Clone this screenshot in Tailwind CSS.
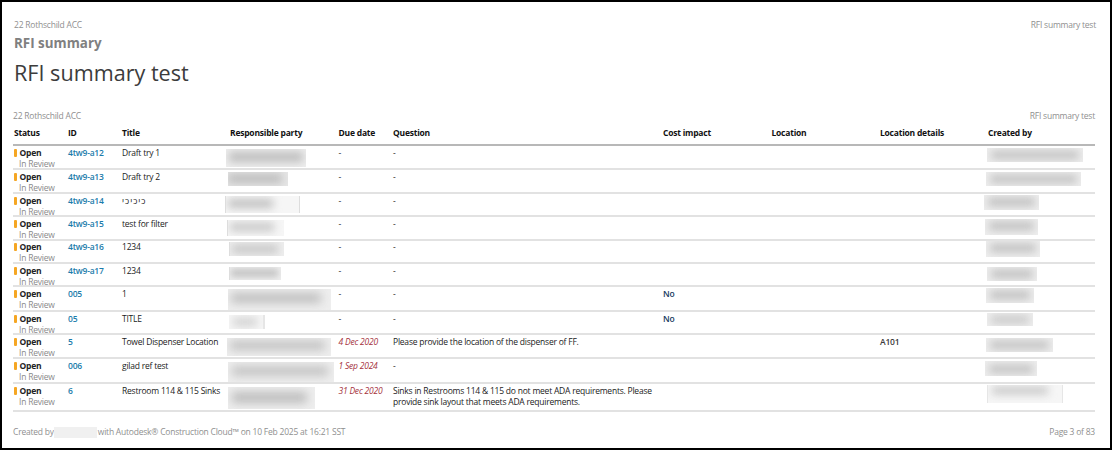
<!DOCTYPE html>
<html lang="en">
<head>
<meta charset="UTF-8">
<title>RFI summary</title>
<script src="https://cdn.jsdelivr.net/npm/@tailwindcss/browser@4"></script>
</head>
<body class="w-[1112px] h-[450px] overflow-hidden bg-white">
<div class="relative w-[1112px] h-[450px] border-2 border-black bg-white font-['Open_Sans',sans-serif] text-[8.5px] tracking-[-0.22px] leading-[11px] text-[#222]">
  <!-- page header -->
  <div class="flex justify-between pl-[12px] pr-[14px] pt-[17px] text-[#8f8f8f]">
    <span>22 Rothschild ACC</span>
    <span>RFI summary test</span>
  </div>
  <h2 class="pl-[12px] mt-[4px] text-[13.4px] tracking-normal leading-[18px] font-bold text-[#808080]">RFI summary</h2>
  <h1 class="pl-[12px] mt-[5px] text-[21.6px] tracking-normal leading-[32px] text-[#3c3c3c]">RFI summary test</h1>

  <div class="flex justify-between pl-[11px] pr-[15px] mt-[21px] text-[#8f8f8f]">
    <span>22 Rothschild ACC</span>
    <span>RFI summary test</span>
  </div>

  <!-- table -->
  <div class="ml-[11px] mr-[15px] mt-[6px] w-[1082px]">
    <div class="grid grid-cols-[54px_54px_108px_108.5px_54.5px_270px_108.5px_108.5px_108px_1fr] h-[19px] pl-[1px] border-b-2 border-[#b8b8b8] font-bold text-[#111]">
      <div>Status</div><div>ID</div><div>Title</div><div>Responsible party</div><div>Due date</div><div>Question</div><div>Cost impact</div><div>Location</div><div>Location details</div><div>Created by</div>
    </div>

    <div class="grid grid-cols-[54px_54px_108px_108.5px_54.5px_270px_108.5px_108.5px_108px_1fr] h-[24px] pl-[1px] pt-[1px] border-b-2 border-[#e2e2e2]">
      <div class="flex flex-col"><span class="flex items-center gap-[3px] font-bold"><i class="w-[2.5px] h-[8px] rounded-[1px] bg-[#f5a623]"></i>Open</span><span class="pl-[5px] text-[#8a8a8a]">In Review</span></div>
      <div class="font-semibold text-[#1b7cab]">4tw9-a12</div><div>Draft try 1</div><div></div><div>-</div><div>-</div><div></div><div></div><div></div><div></div>
    </div>
    <div class="grid grid-cols-[54px_54px_108px_108.5px_54.5px_270px_108.5px_108.5px_108px_1fr] h-[24px] pl-[1px] pt-[1px] border-b-2 border-[#e2e2e2]">
      <div class="flex flex-col"><span class="flex items-center gap-[3px] font-bold"><i class="w-[2.5px] h-[8px] rounded-[1px] bg-[#f5a623]"></i>Open</span><span class="pl-[5px] text-[#8a8a8a]">In Review</span></div>
      <div class="font-semibold text-[#1b7cab]">4tw9-a13</div><div>Draft try 2</div><div></div><div>-</div><div>-</div><div></div><div></div><div></div><div></div>
    </div>
    <div class="grid grid-cols-[54px_54px_108px_108.5px_54.5px_270px_108.5px_108.5px_108px_1fr] h-[23px] pl-[1px] pt-[1px] border-b-2 border-[#e2e2e2]">
      <div class="flex flex-col"><span class="flex items-center gap-[3px] font-bold"><i class="w-[2.5px] h-[8px] rounded-[1px] bg-[#f5a623]"></i>Open</span><span class="pl-[5px] text-[#8a8a8a]">In Review</span></div>
      <div class="font-semibold text-[#1b7cab]">4tw9-a14</div><div class="tracking-[1px]">כיכיכי</div><div></div><div>-</div><div>-</div><div></div><div></div><div></div><div></div>
    </div>
    <div class="grid grid-cols-[54px_54px_108px_108.5px_54.5px_270px_108.5px_108.5px_108px_1fr] h-[24px] pl-[1px] pt-[1px] border-b-2 border-[#e2e2e2]">
      <div class="flex flex-col"><span class="flex items-center gap-[3px] font-bold"><i class="w-[2.5px] h-[8px] rounded-[1px] bg-[#f5a623]"></i>Open</span><span class="pl-[5px] text-[#8a8a8a]">In Review</span></div>
      <div class="font-semibold text-[#1b7cab]">4tw9-a15</div><div>test for filter</div><div></div><div>-</div><div>-</div><div></div><div></div><div></div><div></div>
    </div>
    <div class="grid grid-cols-[54px_54px_108px_108.5px_54.5px_270px_108.5px_108.5px_108px_1fr] h-[23px] pl-[1px] border-b-2 border-[#e2e2e2]">
      <div class="flex flex-col"><span class="flex items-center gap-[3px] font-bold"><i class="w-[2.5px] h-[8px] rounded-[1px] bg-[#f5a623]"></i>Open</span><span class="pl-[5px] text-[#8a8a8a]">In Review</span></div>
      <div class="font-semibold text-[#1b7cab]">4tw9-a16</div><div>1234</div><div></div><div>-</div><div>-</div><div></div><div></div><div></div><div></div>
    </div>
    <div class="grid grid-cols-[54px_54px_108px_108.5px_54.5px_270px_108.5px_108.5px_108px_1fr] h-[23px] pl-[1px] pt-[1px] border-b-2 border-[#e2e2e2]">
      <div class="flex flex-col"><span class="flex items-center gap-[3px] font-bold"><i class="w-[2.5px] h-[8px] rounded-[1px] bg-[#f5a623]"></i>Open</span><span class="pl-[5px] text-[#8a8a8a]">In Review</span></div>
      <div class="font-semibold text-[#1b7cab]">4tw9-a17</div><div>1234</div><div></div><div>-</div><div>-</div><div></div><div></div><div></div><div></div>
    </div>
    <div class="grid grid-cols-[54px_54px_108px_108.5px_54.5px_270px_108.5px_108.5px_108px_1fr] h-[25px] pl-[1px] pt-[1px] border-b-2 border-[#e2e2e2]">
      <div class="flex flex-col"><span class="flex items-center gap-[3px] font-bold"><i class="w-[2.5px] h-[8px] rounded-[1px] bg-[#f5a623]"></i>Open</span><span class="pl-[5px] text-[#8a8a8a]">In Review</span></div>
      <div class="font-semibold text-[#1b7cab]">005</div><div>1</div><div></div><div>-</div><div>-</div><div class="font-semibold text-[#173a5e]">No</div><div></div><div></div><div></div>
    </div>
    <div class="grid grid-cols-[54px_54px_108px_108.5px_54.5px_270px_108.5px_108.5px_108px_1fr] h-[23px] pl-[1px] pt-[1px] border-b-2 border-[#e2e2e2]">
      <div class="flex flex-col"><span class="flex items-center gap-[3px] font-bold"><i class="w-[2.5px] h-[8px] rounded-[1px] bg-[#f5a623]"></i>Open</span><span class="pl-[5px] text-[#8a8a8a]">In Review</span></div>
      <div class="font-semibold text-[#1b7cab]">05</div><div>TITLE</div><div></div><div>-</div><div>-</div><div class="font-semibold text-[#173a5e]">No</div><div></div><div></div><div></div>
    </div>
    <div class="grid grid-cols-[54px_54px_108px_108.5px_54.5px_270px_108.5px_108.5px_108px_1fr] h-[24px] pl-[1px] pt-[1px] border-b-2 border-[#e2e2e2]">
      <div class="flex flex-col"><span class="flex items-center gap-[3px] font-bold"><i class="w-[2.5px] h-[8px] rounded-[1px] bg-[#f5a623]"></i>Open</span><span class="pl-[5px] text-[#8a8a8a]">In Review</span></div>
      <div class="font-semibold text-[#1b7cab]">5</div><div>Towel Dispenser Location</div><div></div><div class="italic text-[#a5323c]">4 Dec 2020</div><div>Please provide the location of the dispenser of FF.</div><div></div><div></div><div class="font-semibold text-[#3a3a3a]">A101</div><div></div>
    </div>
    <div class="grid grid-cols-[54px_54px_108px_108.5px_54.5px_270px_108.5px_108.5px_108px_1fr] h-[25px] pl-[1px] pt-[1px] border-b-2 border-[#e2e2e2]">
      <div class="flex flex-col"><span class="flex items-center gap-[3px] font-bold"><i class="w-[2.5px] h-[8px] rounded-[1px] bg-[#f5a623]"></i>Open</span><span class="pl-[5px] text-[#8a8a8a]">In Review</span></div>
      <div class="font-semibold text-[#1b7cab]">006</div><div>gilad ref test</div><div></div><div class="italic text-[#a5323c]">1 Sep 2024</div><div>-</div><div></div><div></div><div></div><div></div>
    </div>
    <div class="grid grid-cols-[54px_54px_108px_108.5px_54.5px_270px_108.5px_108.5px_108px_1fr] h-[28px] pl-[1px] pt-[1px] border-b-2 border-[#e2e2e2]">
      <div class="flex flex-col"><span class="flex items-center gap-[3px] font-bold"><i class="w-[2.5px] h-[8px] rounded-[1px] bg-[#f5a623]"></i>Open</span><span class="pl-[5px] text-[#8a8a8a]">In Review</span></div>
      <div class="font-semibold text-[#1b7cab]">6</div><div>Restroom 114 &amp; 115 Sinks</div><div></div><div class="italic text-[#a5323c]">31 Dec 2020</div><div class="w-[264px]">Sinks in Restrooms 114 &amp; 115 do not meet ADA requirements. Please provide sink layout that meets ADA requirements.</div><div></div><div></div><div></div><div></div>
    </div>
  </div>

  <!-- page footer -->
  <div class="flex justify-between pl-[11px] pr-[15px] mt-[14px] text-[#8f8f8f]">
    <span>Created by <span class="inline-block w-[40px]"></span> with Autodesk® Construction Cloud™ on 10 Feb 2025 at 16:21 SST</span>
    <span>Page 3 of 83</span>
  </div>

  <!-- redactions over the names, coordinates are the blurred areas -->
  <div class="absolute left-[224px] top-[147px] w-[80px] h-[18px] overflow-hidden bg-[#eeeeee]"><div class="mx-[3px] mt-[3px] h-[10px] bg-[#bdbdbd] blur-[4px]"></div></div>
  <div class="absolute left-[226px] top-[170px] w-[60px] h-[14px] overflow-hidden bg-[#e6e6e6]"><div class="mr-[6px] mt-[2px] h-[9px] bg-[#bbbbbb] blur-[4px]"></div></div>
  <div class="absolute left-[223px] top-[194px] w-[75px] h-[17px] overflow-hidden bg-[#f6f6f6] border-x border-[#dddddd]"><div class="mr-[26px] ml-[2px] mt-[3px] h-[9px] bg-[#c0c0c0] blur-[4px]"></div></div>
  <div class="absolute left-[225px] top-[218px] w-[57px] h-[16px] overflow-hidden bg-[#f6f6f6] border-l border-[#dddddd]"><div class="mr-[10px] ml-[2px] mt-[3px] h-[8px] bg-[#c4c4c4] blur-[4px]"></div></div>
  <div class="absolute left-[227px] top-[240px] w-[55px] h-[14px] overflow-hidden bg-[#eeeeee] border-l border-[#dddddd]"><div class="mr-[6px] ml-[2px] mt-[3px] h-[8px] bg-[#c4c4c4] blur-[4px]"></div></div>
  <div class="absolute left-[227px] top-[265px] w-[52px] h-[13px] overflow-hidden bg-[#eeeeee] border-l border-[#dddddd]"><div class="mr-[3px] ml-[1px] mt-[2px] h-[8px] bg-[#c4c4c4] blur-[3px]"></div></div>
  <div class="absolute left-[226px] top-[287px] w-[103px] h-[21px] overflow-hidden bg-[#eeeeee]"><div class="mr-[10px] ml-[3px] mt-[4px] h-[10px] bg-[#bfbfbf] blur-[5px]"></div></div>
  <div class="absolute left-[227px] top-[313px] w-[36px] h-[14px] overflow-hidden bg-[#f6f6f6] border-r-2 border-[#e6e6e6]"><div class="mr-[6px] ml-[4px] mt-[3px] h-[8px] bg-[#d0d0d0] blur-[4px]"></div></div>
  <div class="absolute left-[225px] top-[336px] w-[104px] h-[18px] overflow-hidden bg-[#eeeeee]"><div class="mr-[6px] ml-[3px] mt-[3px] h-[9px] bg-[#c0c0c0] blur-[5px]"></div></div>
  <div class="absolute left-[226px] top-[360px] w-[106px] h-[20px] overflow-hidden bg-[#eeeeee]"><div class="mr-[6px] ml-[4px] mt-[4px] h-[10px] bg-[#c4c4c4] blur-[5px]"></div></div>
  <div class="absolute left-[226px] top-[385px] w-[87px] h-[22px] overflow-hidden bg-[#eeeeee]"><div class="mr-[8px] ml-[4px] mt-[5px] h-[11px] bg-[#bdbdbd] blur-[5px]"></div></div>

  <div class="absolute left-[985px] top-[146px] w-[96px] h-[14px] overflow-hidden bg-[#eeeeee]"><div class="mx-[4px] mt-[3px] h-[8px] bg-[#c0c0c0] blur-[4px]"></div></div>
  <div class="absolute left-[984px] top-[170px] w-[95px] h-[14px] overflow-hidden bg-[#eeeeee]"><div class="mx-[4px] mt-[3px] h-[8px] bg-[#c0c0c0] blur-[4px]"></div></div>
  <div class="absolute left-[982px] top-[193px] w-[55px] h-[15px] overflow-hidden bg-[#eeeeee]"><div class="mx-[4px] mt-[3px] h-[8px] bg-[#bdbdbd] blur-[4px]"></div></div>
  <div class="absolute left-[983px] top-[217px] w-[53px] h-[16px] overflow-hidden bg-[#eeeeee]"><div class="mx-[4px] mt-[3px] h-[8px] bg-[#bdbdbd] blur-[4px]"></div></div>
  <div class="absolute left-[984px] top-[239px] w-[54px] h-[16px] overflow-hidden bg-[#eeeeee]"><div class="mx-[4px] mt-[3px] h-[8px] bg-[#bdbdbd] blur-[4px]"></div></div>
  <div class="absolute left-[985px] top-[265px] w-[50px] h-[14px] overflow-hidden bg-[#eeeeee]"><div class="mx-[4px] mt-[3px] h-[8px] bg-[#bdbdbd] blur-[4px]"></div></div>
  <div class="absolute left-[984px] top-[286px] w-[48px] h-[15px] overflow-hidden bg-[#eeeeee]"><div class="mx-[4px] mt-[3px] h-[8px] bg-[#bdbdbd] blur-[4px]"></div></div>
  <div class="absolute left-[985px] top-[311px] w-[46px] h-[13px] overflow-hidden bg-[#eeeeee]"><div class="mx-[4px] mt-[3px] h-[7px] bg-[#c4c4c4] blur-[4px]"></div></div>
  <div class="absolute left-[984px] top-[336px] w-[67px] h-[14px] overflow-hidden bg-[#eeeeee]"><div class="mx-[4px] mt-[3px] h-[8px] bg-[#c0c0c0] blur-[4px]"></div></div>
  <div class="absolute left-[983px] top-[359px] w-[52px] h-[15px] overflow-hidden bg-[#eeeeee]"><div class="mx-[4px] mt-[4px] h-[8px] bg-[#c0c0c0] blur-[4px]"></div></div>
  <div class="absolute left-[985px] top-[383px] w-[76px] h-[18px] overflow-hidden bg-[#f6f6f6] border-x border-[#e6e6e6]"><div class="mr-[14px] ml-[4px] mt-[2px] h-[7px] bg-[#c4c4c4] blur-[4px]"></div></div>

  <div class="absolute left-[52px] top-[425px] w-[43px] h-[11px] bg-[#f0f0f0]"></div>
</div>
</body>
</html>
